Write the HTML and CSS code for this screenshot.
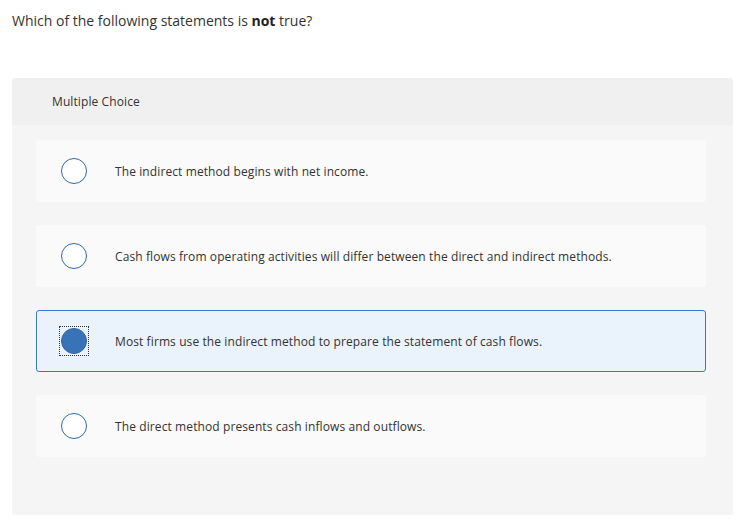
FILE: index.html
```html
<!DOCTYPE html>
<html>
<head>
<meta charset="utf-8">
<link rel="stylesheet" href="styles.css">
</head>
<body>
<div class="page">
  <p class="question">Which of the following statements is <strong>not</strong> true?</p>
  <div class="panel">
    <div class="panel-head">Multiple Choice</div>
    <div class="panel-body">
      <div class="option">
        <span class="radio"></span>
        <span class="label">The indirect method begins with net income.</span>
      </div>
      <div class="option">
        <span class="radio"></span>
        <span class="label">Cash flows from operating activities will differ between the direct and indirect methods.</span>
      </div>
      <div class="option selected">
        <span class="focus"><span class="radio checked"></span></span>
        <span class="label">Most firms use the indirect method to prepare the statement of cash flows.</span>
      </div>
      <div class="option">
        <span class="radio"></span>
        <span class="label">The direct method presents cash inflows and outflows.</span>
      </div>
    </div>
  </div>
</div>
</body>
</html>
```
FILE: styles.css
```css
* { box-sizing: border-box; }
html, body { margin: 0; padding: 0; background: #fff; }
body {
  font-family: "Open Sans", "Liberation Sans", sans-serif;
  color: #333;
}
.page { padding: 12px 9px 0 12px; }
.question {
  margin: 0;
  font-size: 14px;
  line-height: 18px;
  color: #333;
}
.question strong { font-weight: 700; color: #222; }
.panel {
  margin-top: 48px;
  background: #f5f5f5;
  border-radius: 3px;
  overflow: hidden;
}
.panel-head {
  background: #f0f0f0;
  height: 47px;
  padding-left: 40px;
  display: flex;
  align-items: center;
  font-size: 12px;
  letter-spacing: 0.1px;
  color: #333;
}
.panel-body {
  padding: 15px 27px 58px 24px;
  display: flex;
  flex-direction: column;
  gap: 23px;
}
.option {
  height: 62px;
  background: #fafafa;
  border-radius: 3px;
  display: flex;
  align-items: center;
  padding-left: 24px;
  border: 1px solid transparent;
}
.option.selected {
  background: #eaf2fb;
  border-color: #3a78c0;
}
.radio {
  width: 26px;
  height: 26px;
  border-radius: 50%;
  border: 1.5px solid #2f6aa5;
  background: #fff;
  flex: none;
}
.radio.checked {
  background: #3873b8;
  border-color: #2f66a3;
}
.focus {
  width: 30px;
  height: 30px;
  margin-left: -2px;
  margin-right: -2px;
  border: 1px dotted #333;
  display: flex;
  align-items: center;
  justify-content: center;
  flex: none;
}
.label {
  margin-left: 28px;
  font-size: 12px;
  letter-spacing: 0.1px;
  color: #333;
}
```
